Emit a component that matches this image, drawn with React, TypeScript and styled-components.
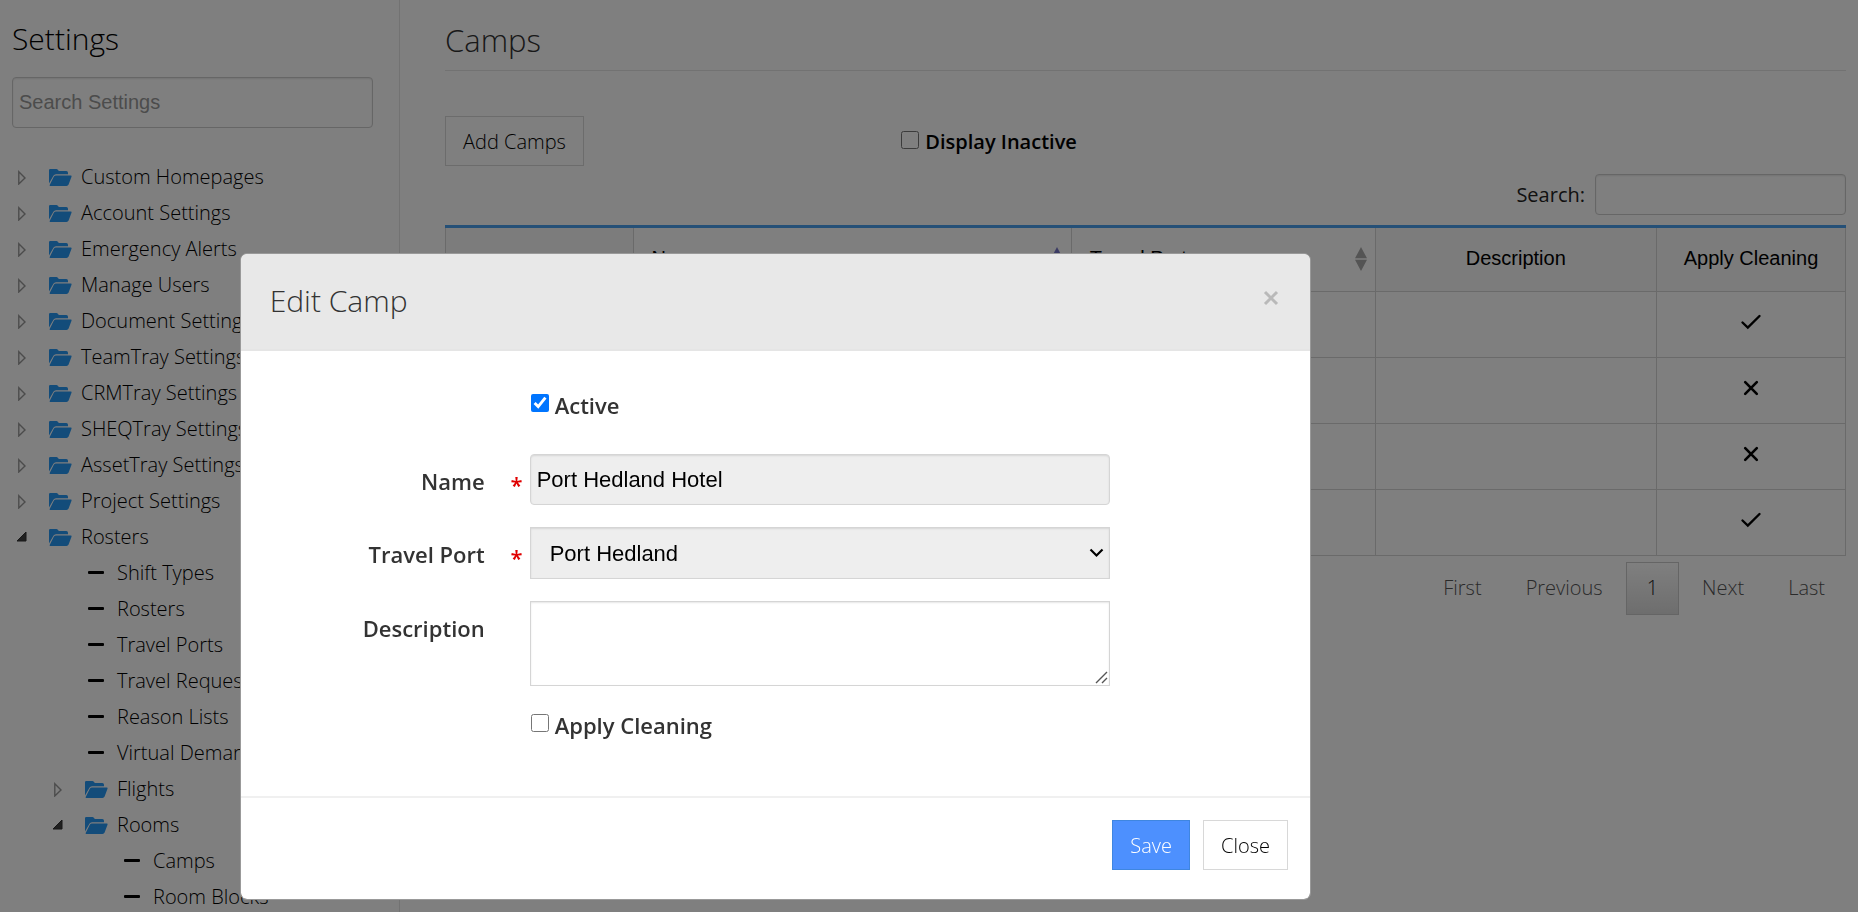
import React from "react";
import styled, { createGlobalStyle } from "styled-components";

const GlobalStyle = createGlobalStyle`
  *, *::before, *::after { box-sizing: border-box; }
  html, body, #root { height: 100%; }
  body {
    margin: 0;
    overflow: hidden;
    background: #fff;
    color: #000;
    font-family: "Open Sans", sans-serif;
    font-size: 20px;
    font-weight: 350;
    line-height: 26px;
  }
`;

const Page = styled.div`
  display: grid;
  grid-template-columns: 400px minmax(0, 1fr);
  min-height: 100%;
`;

const Sidebar = styled.aside`
  padding: 19px 26px 0 12px;
  border-right: 1px solid #e5e5e5;
`;

const SidebarTitle = styled.h2`
  margin: 0 0 18px;
  font-size: 30px;
  font-weight: 300;
  line-height: 40px;
`;

const TextInput = styled.input`
  display: block;
  width: 100%;
  height: 51px;
  padding: 0 6px;
  border: 1px solid #ccc;
  border-radius: 4px;
  background: #fff;
  box-shadow: inset 0 1px 2px rgba(0, 0, 0, 0.1);
  color: #000;
  font: 20px "Liberation Sans", sans-serif;
  &::placeholder { color: #999; opacity: 1; }
`;

const Tree = styled.ul`
  margin: 0;
  padding: 0;
  list-style: none;
`;

const RootTree = styled(Tree)`
  margin-top: 31px;
`;

const SubTree = styled(Tree)`
  padding-left: 36px;
`;

const TreeRow = styled.a`
  display: flex;
  align-items: center;
  height: 36px;
  color: #000;
  text-decoration: none;
  white-space: nowrap;
`;

const ArrowSlot = styled.span`
  display: flex;
  width: 37px;
  padding-left: 4px;
`;

const IconSlot = styled.span<{ $leaf?: boolean }>`
  display: flex;
  width: 32px;
  padding-left: ${(p) => (p.$leaf ? "2px" : "0")};
  color: ${(p) => (p.$leaf ? "#000" : "#2698f4")};
`;

const Main = styled.main`
  padding: 20px 12px 0 45px;
`;

const PageTitle = styled.h1`
  margin: 0;
  padding-bottom: 10px;
  border-bottom: 1px solid #e5e5e5;
  color: #333;
  font-size: 31px;
  font-weight: 300;
  line-height: 40px;
`;

const Toolbar = styled.div`
  display: grid;
  grid-template-columns: 13fr 27fr;
  align-items: center;
  margin-top: 45px;
`;

const Button = styled.button<{ $primary?: boolean }>`
  justify-self: start;
  height: 50px;
  padding: 0 17px;
  border: 1px solid ${(p) => (p.$primary ? "#3f86e0" : "#d8d8d8")};
  background: ${(p) => (p.$primary ? "#4d90fe" : "#fff")};
  color: ${(p) => (p.$primary ? "#fff" : "#000")};
  font: 350 20px "Open Sans", sans-serif;
`;

const CheckLabel = styled.label`
  display: inline-flex;
  align-items: center;
  gap: 6px;
  font-weight: 600;
`;

const ToolbarCheck = styled(CheckLabel)`
  padding-top: 2px;
`;

const Checkbox = styled.input`
  width: 18px;
  height: 18px;
  margin: 0 0 4px 1px;
  accent-color: #0075ff;
`;

const SearchRow = styled.div`
  display: flex;
  justify-content: flex-end;
  margin: 8px 0 10px;
`;

const SearchLabel = styled.label`
  display: flex;
  align-items: center;
  gap: 10px;
  color: #222;
  font-weight: 500;
`;

const SearchInput = styled(TextInput)`
  width: 251px;
  height: 41px;
`;

const Table = styled.table`
  width: 100%;
  border-collapse: collapse;
  border-top: 3px solid #4aa0ee;
  table-layout: fixed;
`;

const HeadCell = styled.th<{ $width: string; $sortable?: boolean }>`
  width: ${(p) => p.$width};
  height: 65px;
  padding: 0 ${(p) => (p.$sortable ? "8px" : "18px")} 2px 18px;
  border: 1px solid #d5d5d5;
  border-top: 0;
  background: ${(p) => (p.$sortable ? "#fff" : "#f8f8f8")};
  font: 20px "Liberation Sans", sans-serif;
  text-align: ${(p) => (p.$sortable ? "left" : "center")};
  white-space: nowrap;
`;

const SortHead = styled.span`
  display: flex;
  align-items: center;
  justify-content: space-between;
`;

const Cell = styled.td<{ $center?: boolean }>`
  height: 66px;
  padding: 0 18px 6px;
  border: 1px solid #d5d5d5;
  text-align: ${(p) => (p.$center ? "center" : "left")};
  & > svg { display: block; margin: 0 auto; }
`;

const Pager = styled.nav`
  display: flex;
  justify-content: flex-end;
  gap: 2px;
  margin-top: 6px;
`;

const PageButton = styled.button<{ $current?: boolean }>`
  height: 53px;
  padding: 0 20px 2px;
  border: 1px solid ${(p) => (p.$current ? "#cacaca" : "transparent")};
  background: ${(p) => (p.$current ? "linear-gradient(#fff, #dcdcdc)" : "transparent")};
  color: ${(p) => (p.$current ? "#222" : "#555")};
  font: 350 20px "Open Sans", sans-serif;
`;

const Backdrop = styled.div`
  position: fixed;
  inset: 0;
  padding: 253px 0 0 12.9%;
  overflow: hidden;
  background: rgba(0, 0, 0, 0.5);
`;

const Dialog = styled.section`
  width: 66.2%;
  border: 1px solid #999;
  border-radius: 7px;
  background: #fff;
  background-clip: padding-box;
  color: #333;
  overflow: hidden;
`;

const DialogHeader = styled.header`
  display: flex;
  align-items: center;
  justify-content: space-between;
  height: 97px;
  padding: 0 29px 2px;
  border-bottom: 2px solid #e5e5e5;
  background: #e8e8e8;
`;

const DialogTitle = styled.h3`
  margin: 0;
  font-size: 30px;
  font-weight: 300;
  line-height: 40px;
`;

const CloseIcon = styled.button`
  display: flex;
  padding: 2px;
  margin-bottom: 5px;
  border: 0;
  background: none;
  color: #b9b9b9;
`;

const DialogBody = styled.form`
  display: grid;
  grid-template-columns: 244px 31px minmax(0, 580px);
  column-gap: 7px;
  padding: 39px 0 56px;
`;

const Field = styled.div<{ $top?: boolean; $gap: number }>`
  display: grid;
  grid-column: 1 / -1;
  grid-template-columns: subgrid;
  align-items: ${(p) => (p.$top ? "start" : "center")};
  margin-bottom: ${(p) => p.$gap}px;
`;

const FieldLabel = styled.label<{ $top?: boolean }>`
  padding-top: ${(p) => (p.$top ? "14px" : "2px")};
  font-size: 22px;
  font-weight: 600;
  text-align: right;
`;

const Required = styled.span`
  padding-top: 8px;
  color: #e00000;
  font-size: 22px;
  font-weight: 600;
  text-align: right;
`;

const FieldCheck = styled(CheckLabel)`
  grid-column: 3;
  height: 30px;
  font-size: 22px;
`;

const FormInput = styled(TextInput)`
  border-color: #d5d5d5;
  background: #eee;
  font-size: 22px;
`;

const Overlaid = styled.div`
  position: relative;
  grid-column: 3;
`;

const CornerIcon = styled.svg<{ $right: number; $bottom: number }>`
  position: absolute;
  right: ${(p) => p.$right}px;
  bottom: ${(p) => p.$bottom}px;
  pointer-events: none;
`;

const FormSelect = styled.select`
  display: block;
  width: 100%;
  height: 52px;
  padding: 0 0 0 19px;
  border: 1px solid #d5d5d5;
  border-radius: 0;
  appearance: none;
  background: #eee;
  box-shadow: inset 0 1px 2px rgba(0, 0, 0, 0.1);
  color: #000;
  font: 22px "Liberation Sans", sans-serif;
`;

const FormArea = styled.textarea`
  display: block;
  width: 100%;
  height: 85px;
  border: 1px solid #d5d5d5;
  box-shadow: inset 0 1px 2px rgba(0, 0, 0, 0.1);
  font: 22px "Liberation Sans", sans-serif;
  resize: none;
`;

const DialogFooter = styled.footer`
  display: flex;
  justify-content: flex-end;
  gap: 13px;
  padding: 22px 22px 29px;
  border-top: 2px solid #f0f0f0;
`;

const ClosedArrow = () => (
  <svg width="12" height="16" viewBox="0 0 12 16" aria-hidden="true">
    <path d="M2.8 2.8 L9 9 L2.8 15 Z" fill="none" stroke="#999" strokeWidth="1.4" />
  </svg>
);

const OpenArrow = () => (
  <svg width="12" height="16" viewBox="0 0 12 16" aria-hidden="true">
    <path d="M10 3 V12 H1 Z" fill="#404040" stroke="#303030" />
  </svg>
);

const Folder = () => (
  <svg width="23" height="17" viewBox="0 0 23 17" fill="currentColor" aria-hidden="true">
    <path d="M1.2 0 H7.5 Q8.3 0 8.8 .8 L9.4 1.4 Q9.8 2 10.8 2 H17.3 Q19 2 19 3.8 V5.2 H7 Q5.3 5.2 4.4 6.8 L0 14.5 V1.2 Q0 0 1.2 0 Z" />
    <path d="M7 6.4 H21.8 Q23 6.4 22.5 7.8 L19.6 15.6 Q19 17 17.5 17 H1.2 Q.3 17 .7 16 L4.8 7.8 Q5.4 6.4 7 6.4 Z" />
  </svg>
);

const Dash = () => (
  <svg width="18" height="16" viewBox="0 0 18 16" aria-hidden="true">
    <rect x="1" y="6" width="16" height="3" rx="1" fill="currentColor" />
  </svg>
);

const Tick = () => (
  <svg width="22" height="18" viewBox="0 0 22 18" role="img" aria-label="Yes">
    <path d="M2.5 9.5 L7.8 14.5 L19.5 3" fill="none" stroke="#000" strokeWidth="2.4" strokeLinecap="round" />
  </svg>
);

const Cross = () => (
  <svg width="18" height="18" viewBox="0 0 18 18" role="img" aria-label="No">
    <path d="M3.2 3.2 L14.8 14.8 M14.8 3.2 L3.2 14.8" stroke="#000" strokeWidth="2.6" strokeLinecap="round" />
  </svg>
);

const SortIcon = ({ ascending }: { ascending?: boolean }) => (
  <svg width="12" height="24" viewBox="0 0 12 24" aria-hidden="true">
    <path d="M6 0 L12 11.3 H0 Z" fill={ascending ? "#7676c8" : "#a8a8a8"} />
    {!ascending && <path d="M0 12.7 H12 L6 24 Z" fill="#a8a8a8" />}
  </svg>
);

type Node = { name: string; leaf?: boolean; children?: Node[] };

const leaf = (name: string): Node => ({ name, leaf: true });

const tree: Node[] = [
  { name: "Custom Homepages" },
  { name: "Account Settings" },
  { name: "Emergency Alerts" },
  { name: "Manage Users" },
  { name: "Document Settings" },
  { name: "TeamTray Settings" },
  { name: "CRMTray Settings" },
  { name: "SHEQTray Settings" },
  { name: "AssetTray Settings" },
  { name: "Project Settings" },
  {
    name: "Rosters",
    children: [
      leaf("Shift Types"),
      leaf("Rosters"),
      leaf("Travel Ports"),
      leaf("Travel Requests"),
      leaf("Reason Lists"),
      leaf("Virtual Demand"),
      { name: "Flights" },
      { name: "Rooms", children: [leaf("Camps"), leaf("Room Blocks")] },
    ],
  },
];

const TreeItem = ({ node }: { node: Node }) => (
  <li>
    <TreeRow href="#">
      <ArrowSlot>{!node.leaf && (node.children ? <OpenArrow /> : <ClosedArrow />)}</ArrowSlot>
      <IconSlot $leaf={node.leaf}>{node.leaf ? <Dash /> : <Folder />}</IconSlot>
      {node.name}
    </TreeRow>
    {node.children && (
      <SubTree>
        {node.children.map((child) => (
          <TreeItem key={child.name} node={child} />
        ))}
      </SubTree>
    )}
  </li>
);

const cleaning = [true, false, false, true];

export default function App() {
  return (
    <>
      <GlobalStyle />
      <Page>
        <Sidebar>
          <SidebarTitle>Settings</SidebarTitle>
          <TextInput type="text" placeholder="Search Settings" aria-label="Search Settings" />
          <RootTree>
            {tree.map((node) => (
              <TreeItem key={node.name} node={node} />
            ))}
          </RootTree>
        </Sidebar>
        <Main>
          <PageTitle>Camps</PageTitle>
          <Toolbar>
            <Button type="button">Add Camps</Button>
            <ToolbarCheck>
              <Checkbox type="checkbox" />
              Display Inactive
            </ToolbarCheck>
          </Toolbar>
          <SearchRow>
            <SearchLabel>
              Search:
              <SearchInput type="search" />
            </SearchLabel>
          </SearchRow>
          <Table>
            <thead>
              <tr>
                <HeadCell $width="13.4%" />
                <HeadCell $width="31.3%" $sortable>
                  <SortHead>Name <SortIcon ascending /></SortHead>
                </HeadCell>
                <HeadCell $width="21.7%" $sortable>
                  <SortHead>Travel Port <SortIcon /></SortHead>
                </HeadCell>
                <HeadCell $width="20.1%">Description</HeadCell>
                <HeadCell $width="13.5%">Apply Cleaning</HeadCell>
              </tr>
            </thead>
            <tbody>
              {cleaning.map((applied, row) => (
                <tr key={row}>
                  <Cell />
                  <Cell />
                  <Cell />
                  <Cell />
                  <Cell $center>{applied ? <Tick /> : <Cross />}</Cell>
                </tr>
              ))}
            </tbody>
          </Table>
          <Pager aria-label="Pages">
            <PageButton type="button">First</PageButton>
            <PageButton type="button">Previous</PageButton>
            <PageButton type="button" $current>1</PageButton>
            <PageButton type="button">Next</PageButton>
            <PageButton type="button">Last</PageButton>
          </Pager>
        </Main>
      </Page>
      <Backdrop>
        <Dialog role="dialog" aria-modal="true" aria-labelledby="dialog-title">
          <DialogHeader>
            <DialogTitle id="dialog-title">Edit Camp</DialogTitle>
            <CloseIcon type="button" aria-label="Close dialog">
              <svg width="16" height="16" viewBox="0 0 16 16" aria-hidden="true">
                <path d="M2 2 L14 14 M14 2 L2 14" stroke="currentColor" strokeWidth="3" />
              </svg>
            </CloseIcon>
          </DialogHeader>
          <DialogBody>
            <Field $gap={34}>
              <FieldCheck>
                <Checkbox type="checkbox" defaultChecked />
                Active
              </FieldCheck>
            </Field>
            <Field $gap={22}>
              <FieldLabel htmlFor="name">Name</FieldLabel>
              <Required>*</Required>
              <FormInput id="name" type="text" defaultValue="Port Hedland Hotel" />
            </Field>
            <Field $gap={22}>
              <FieldLabel htmlFor="port">Travel Port</FieldLabel>
              <Required>*</Required>
              <Overlaid>
                <FormSelect id="port" defaultValue="Port Hedland">
                  <option>Port Hedland</option>
                </FormSelect>
                <CornerIcon $right={6} $bottom={21} width="15" height="10" viewBox="0 0 15 10" aria-hidden="true">
                  <path d="M1.5 1.5 L7.5 7.5 L13.5 1.5" fill="none" stroke="#000" strokeWidth="2.2" />
                </CornerIcon>
              </Overlaid>
            </Field>
            <Field $gap={24} $top>
              <FieldLabel htmlFor="description" $top>Description</FieldLabel>
              <Overlaid>
                <FormArea id="description" />
                <CornerIcon $right={2} $bottom={2} width="13" height="13" viewBox="0 0 13 13" aria-hidden="true">
                  <path d="M1 12 L12 1 M7 12 L12 7" stroke="#555" strokeWidth="1.4" />
                </CornerIcon>
              </Overlaid>
            </Field>
            <Field $gap={0}>
              <FieldCheck>
                <Checkbox type="checkbox" />
                Apply Cleaning
              </FieldCheck>
            </Field>
          </DialogBody>
          <DialogFooter>
            <Button type="button" $primary>Save</Button>
            <Button type="button">Close</Button>
          </DialogFooter>
        </Dialog>
      </Backdrop>
    </>
  );
}
